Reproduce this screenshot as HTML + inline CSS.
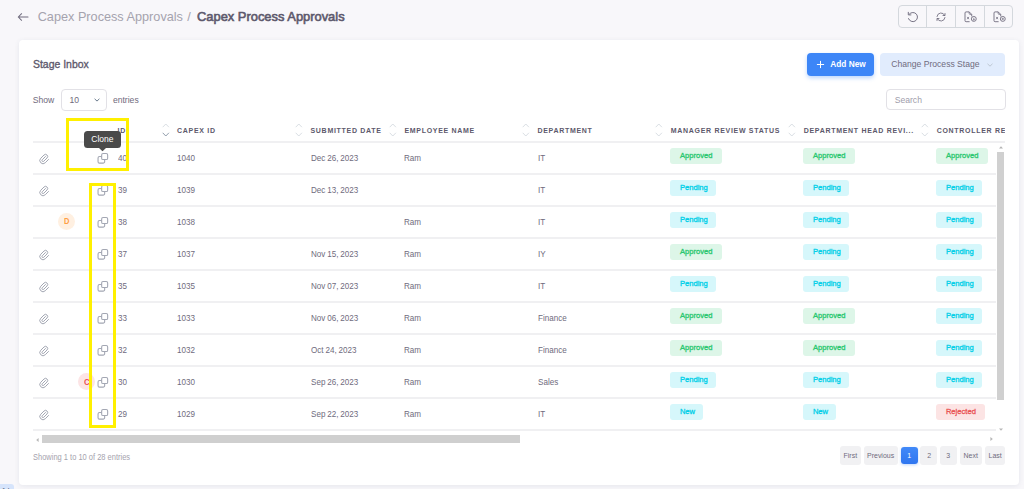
<!DOCTYPE html>
<html><head><meta charset="utf-8"><title>Capex Process Approvals</title>
<style>
html,body{margin:0;padding:0;}
body{width:1024px;height:489px;overflow:hidden;background:#f8f7fa;position:relative;font-family:"Liberation Sans", sans-serif;}
.t{position:absolute;white-space:nowrap;line-height:1;}
.b{position:absolute;}
svg.b{overflow:visible;}
</style></head><body>
<svg class="b" style="left:17px;top:12px" width="12" height="10" viewBox="0 0 12 10"><path d="M1.3 5H11M1.3 5L4.6 1.7M1.3 5L4.6 8.3" fill="none" stroke="#6f6b7d" stroke-width="1.05" stroke-linecap="round" stroke-linejoin="round"/></svg>
<div class="t" style="left:37.70px;top:10.55px;font-size:12.70px;color:#a5a3ae;font-weight:400;letter-spacing:0.000px;">Capex Process Approvals</div>
<div class="t" style="left:187.20px;top:10.55px;font-size:12.70px;color:#a5a3ae;font-weight:400;letter-spacing:0.000px;">/</div>
<div class="t" style="left:197.00px;top:10.68px;font-size:12.90px;color:#5d596c;font-weight:400;letter-spacing:0.000px;-webkit-text-stroke:0.6px #5d596c;">Capex Process Approvals</div>
<div class="b" style="left:897.60px;top:5.30px;width:115.80px;height:22.40px;border:1px solid #d4d8dd;border-radius:4px;box-sizing:border-box;"></div>
<div class="b" style="left:925.90px;top:5.30px;width:1.00px;height:22.40px;background:#d4d8dd;"></div>
<div class="b" style="left:954.90px;top:5.30px;width:1.00px;height:22.40px;background:#d4d8dd;"></div>
<div class="b" style="left:983.80px;top:5.30px;width:1.00px;height:22.40px;background:#d4d8dd;"></div>
<svg class="b" style="left:906.5px;top:11px" width="12" height="12" viewBox="0 0 12 12"><path d="M1.5 7.6A4.6 4.6 0 1 0 2.4 3.0" fill="none" stroke="#6f6b7d" stroke-width="0.95" stroke-linecap="round"/><path d="M1.3 1.3V3.9H3.9" fill="none" stroke="#6f6b7d" stroke-width="0.95" stroke-linecap="round" stroke-linejoin="round"/></svg>
<svg class="b" style="left:935px;top:11px" width="12" height="12" viewBox="0 0 24 24"><path d="M20 11a8.1 8.1 0 0 0 -15.5 -2m-.5 -4v4h4m-4 4a8.1 8.1 0 0 0 15.5 2m.5 4v-4h-4" fill="none" stroke="#6f6b7d" stroke-width="1.7" stroke-linecap="round" stroke-linejoin="round" transform="translate(24 0) scale(-1 1)"/></svg>
<svg class="b" style="left:963.5px;top:10.6px" width="14" height="12" viewBox="0 0 14 12"><path d="M5.6 10.7H2.1A1.1 1.1 0 0 1 1 9.6V2A1.1 1.1 0 0 1 2.1 0.9H5.2L7.7 3.4V5.4" fill="none" stroke="#6f6b7d" stroke-width="0.9" stroke-linejoin="round"/><path d="M5.2 0.9V2.5A0.9 0.9 0 0 0 6.1 3.4H7.7" fill="none" stroke="#6f6b7d" stroke-width="0.8"/><path d="M3.2 5.9L4.9 8.2M4.9 5.9L3.2 8.2" stroke="#6f6b7d" stroke-width="0.75"/><circle cx="9.8" cy="7.9" r="2.45" fill="none" stroke="#6f6b7d" stroke-width="0.9"/><path d="M9.8 6.7V9.1M8.9 8.3L9.8 9.1L10.7 8.3" fill="none" stroke="#6f6b7d" stroke-width="0.7"/></svg>
<svg class="b" style="left:992.5px;top:10.6px" width="14" height="12" viewBox="0 0 14 12"><path d="M5.6 10.7H2.1A1.1 1.1 0 0 1 1 9.6V2A1.1 1.1 0 0 1 2.1 0.9H5.2L7.7 3.4V5.4" fill="none" stroke="#6f6b7d" stroke-width="0.9" stroke-linejoin="round"/><path d="M5.2 0.9V2.5A0.9 0.9 0 0 0 6.1 3.4H7.7" fill="none" stroke="#6f6b7d" stroke-width="0.8"/><path d="M3.2 5.9L4.9 8.2M4.9 5.9L3.2 8.2" stroke="#6f6b7d" stroke-width="0.75"/><circle cx="9.8" cy="7.9" r="2.45" fill="none" stroke="#6f6b7d" stroke-width="0.9"/><path d="M9.8 6.7V9.1M8.6 7.9H11" fill="none" stroke="#6f6b7d" stroke-width="0.7"/></svg>
<div class="b" style="left:18.80px;top:39.80px;width:1000.10px;height:445.20px;background:#fff;border-radius:4px;box-shadow:0 1px 5px rgba(67,89,113,0.10);"></div>
<div class="t" style="left:32.90px;top:59.35px;font-size:11.29px;color:#5d596c;font-weight:400;letter-spacing:0.000px;transform:scaleX(0.9259);transform-origin:0 0;-webkit-text-stroke:0.35px #5d596c;">Stage Inbox</div>
<div class="b" style="left:807.20px;top:53.10px;width:67.20px;height:22.50px;background:#3d86f7;border-radius:4px;box-shadow:0 2px 4px rgba(61,134,247,0.35);"></div>
<svg class="b" style="left:816.5px;top:61px" width="7" height="7" viewBox="0 0 7 7"><path d="M3.5 0.3V6.7M0.3 3.5H6.7" stroke="#fff" stroke-width="1.0" stroke-linecap="round"/></svg>
<div class="t" style="left:830.30px;top:59.97px;font-size:8.30px;color:#fff;font-weight:700;letter-spacing:0.000px;">Add New</div>
<div class="b" style="left:880.30px;top:53.10px;width:124.90px;height:22.50px;background:#e1ecfd;border-radius:4px;"></div>
<div class="t" style="left:891.20px;top:59.72px;font-size:8.60px;color:#6f6b7d;font-weight:400;letter-spacing:0.000px;">Change Process Stage</div>
<svg class="b" style="left:986.5px;top:62.5px" width="6" height="4" viewBox="0 0 6 4"><path d="M0.5 0.8L3 3.2L5.5 0.8" fill="none" stroke="#b4bcc6" stroke-width="0.8"/></svg>
<div class="t" style="left:32.70px;top:96.02px;font-size:8.60px;color:#6f6b7d;font-weight:400;letter-spacing:0.000px;">Show</div>
<div class="b" style="left:61.20px;top:89.00px;width:45.50px;height:21.70px;border:1px solid #e2e1e6;border-radius:4px;box-sizing:border-box;"></div>
<div class="t" style="left:69.50px;top:96.02px;font-size:8.60px;color:#6f6b7d;font-weight:400;letter-spacing:0.000px;">10</div>
<svg class="b" style="left:94px;top:98px" width="6" height="4" viewBox="0 0 6 4"><path d="M0.6 0.8L3 3.1L5.4 0.8" fill="none" stroke="#697a8d" stroke-width="1"/></svg>
<div class="t" style="left:112.90px;top:96.02px;font-size:8.60px;color:#6f6b7d;font-weight:400;letter-spacing:0.000px;">entries</div>
<div class="b" style="left:886.40px;top:89.40px;width:119.20px;height:20.80px;border:1px solid #e2e1e6;border-radius:4px;box-sizing:border-box;"></div>
<div class="t" style="left:894.70px;top:95.92px;font-size:8.60px;color:#a09dab;font-weight:400;letter-spacing:0.000px;">Search</div>
<div class="b" style="left:0;top:0;width:1005px;height:489px;overflow:hidden">
<div class="t" style="left:117.50px;top:127.27px;font-size:7.00px;color:#5d596c;font-weight:700;letter-spacing:0.700px;">ID</div>
<div class="t" style="left:177.10px;top:127.27px;font-size:7.00px;color:#5d596c;font-weight:700;letter-spacing:0.700px;">CAPEX ID</div>
<div class="t" style="left:310.50px;top:127.27px;font-size:7.00px;color:#5d596c;font-weight:700;letter-spacing:0.700px;">SUBMITTED DATE</div>
<div class="t" style="left:404.40px;top:127.27px;font-size:7.00px;color:#5d596c;font-weight:700;letter-spacing:0.700px;">EMPLOYEE NAME</div>
<div class="t" style="left:537.50px;top:127.27px;font-size:7.00px;color:#5d596c;font-weight:700;letter-spacing:0.700px;">DEPARTMENT</div>
<div class="t" style="left:670.70px;top:127.27px;font-size:7.00px;color:#5d596c;font-weight:700;letter-spacing:0.700px;">MANAGER REVIEW STATUS</div>
<div class="t" style="left:803.70px;top:127.27px;font-size:7.00px;color:#5d596c;font-weight:700;letter-spacing:0.700px;">DEPARTMENT HEAD REVI...</div>
<div class="t" style="left:936.70px;top:127.27px;font-size:7.00px;color:#5d596c;font-weight:700;letter-spacing:0.700px;">CONTROLLER RE</div>
<svg class="b" style="left:161.5px;top:123px" width="8" height="14" viewBox="0 0 8 14"><path d="M0.7 4.2L3.8 1L6.9 4.2" fill="none" stroke="#d5dae0" stroke-width="0.9"/><path d="M0.7 9.8L3.8 13L6.9 9.8" fill="none" stroke="#8592a3" stroke-width="0.9"/></svg>
<svg class="b" style="left:294.9px;top:123px" width="8" height="14" viewBox="0 0 8 14"><path d="M0.7 4.2L3.8 1L6.9 4.2" fill="none" stroke="#d5dae0" stroke-width="0.9"/><path d="M0.7 9.8L3.8 13L6.9 9.8" fill="none" stroke="#d5dae0" stroke-width="0.9"/></svg>
<svg class="b" style="left:388.6px;top:123px" width="8" height="14" viewBox="0 0 8 14"><path d="M0.7 4.2L3.8 1L6.9 4.2" fill="none" stroke="#d5dae0" stroke-width="0.9"/><path d="M0.7 9.8L3.8 13L6.9 9.8" fill="none" stroke="#d5dae0" stroke-width="0.9"/></svg>
<svg class="b" style="left:521.9px;top:123px" width="8" height="14" viewBox="0 0 8 14"><path d="M0.7 4.2L3.8 1L6.9 4.2" fill="none" stroke="#d5dae0" stroke-width="0.9"/><path d="M0.7 9.8L3.8 13L6.9 9.8" fill="none" stroke="#d5dae0" stroke-width="0.9"/></svg>
<svg class="b" style="left:654.9px;top:123px" width="8" height="14" viewBox="0 0 8 14"><path d="M0.7 4.2L3.8 1L6.9 4.2" fill="none" stroke="#d5dae0" stroke-width="0.9"/><path d="M0.7 9.8L3.8 13L6.9 9.8" fill="none" stroke="#d5dae0" stroke-width="0.9"/></svg>
<svg class="b" style="left:788.0px;top:123px" width="8" height="14" viewBox="0 0 8 14"><path d="M0.7 4.2L3.8 1L6.9 4.2" fill="none" stroke="#d5dae0" stroke-width="0.9"/><path d="M0.7 9.8L3.8 13L6.9 9.8" fill="none" stroke="#d5dae0" stroke-width="0.9"/></svg>
<svg class="b" style="left:921.4px;top:123px" width="8" height="14" viewBox="0 0 8 14"><path d="M0.7 4.2L3.8 1L6.9 4.2" fill="none" stroke="#d5dae0" stroke-width="0.9"/><path d="M0.7 9.8L3.8 13L6.9 9.8" fill="none" stroke="#d5dae0" stroke-width="0.9"/></svg>
</div>
<div class="b" style="left:33.00px;top:141.00px;width:972.00px;height:2.00px;background:#f0f0f2;"></div>
<div class="b" style="left:0;top:0;width:996px;height:489px;overflow:hidden">
<div class="b" style="left:33.00px;top:173.00px;width:963.00px;height:2.00px;background:#f0f0f2;"></div>
<svg class="b" style="left:37.5px;top:153.30px" width="12" height="12" viewBox="0 0 24 24"><path d="M15 7l-6.5 6.5a1.5 1.5 0 0 0 3 3l6.5 -6.5a3 3 0 0 0 -6 -6l-6.5 6.5a4.5 4.5 0 0 0 9 9l6.5 -6.5" fill="none" stroke="#a3a7b3" stroke-width="2" stroke-linecap="round" stroke-linejoin="round"/></svg>
<svg class="b" style="left:96.7px;top:152.80px" width="12" height="12" viewBox="0 0 12 12"><rect x="4.65" y="0.55" width="6.0" height="6.0" rx="1.4" fill="none" stroke="#a3a7b3" stroke-width="1.1"/><path d="M4.65 3.45H2.55A1.5 1.5 0 0 0 1.05 4.95V8.65A1.5 1.5 0 0 0 2.55 10.15H6.15A1.5 1.5 0 0 0 7.65 8.65V7.05" fill="none" stroke="#a3a7b3" stroke-width="1.1"/></svg>
<div class="t" style="left:117.50px;top:153.05px;font-size:9.40px;color:#6f6b7d;font-weight:400;letter-spacing:0.000px;transform:scaleX(0.8621);transform-origin:0 0;">40</div>
<div class="t" style="left:177.10px;top:153.05px;font-size:9.40px;color:#6f6b7d;font-weight:400;letter-spacing:0.000px;transform:scaleX(0.8621);transform-origin:0 0;">1040</div>
<div class="t" style="left:310.50px;top:153.05px;font-size:9.40px;color:#6f6b7d;font-weight:400;letter-spacing:0.000px;transform:scaleX(0.8621);transform-origin:0 0;word-spacing:-0.5px;">Dec 26, 2023</div>
<div class="t" style="left:404.40px;top:153.05px;font-size:9.40px;color:#6f6b7d;font-weight:400;letter-spacing:0.000px;transform:scaleX(0.8621);transform-origin:0 0;">Ram</div>
<div class="t" style="left:537.50px;top:153.05px;font-size:9.40px;color:#6f6b7d;font-weight:400;letter-spacing:0.000px;transform:scaleX(0.8621);transform-origin:0 0;">IT</div>
<div class="b" style="left:670.20px;top:148.00px;width:51.50px;height:16.00px;background:#ddf6e8;border-radius:3px;"></div>
<div class="t" style="left:679.90px;top:151.67px;font-size:7.60px;color:#28c76f;font-weight:400;letter-spacing:0.000px;-webkit-text-stroke:0.3px #28c76f;">Approved</div>
<div class="b" style="left:803.20px;top:148.00px;width:51.50px;height:16.00px;background:#ddf6e8;border-radius:3px;"></div>
<div class="t" style="left:812.90px;top:151.67px;font-size:7.60px;color:#28c76f;font-weight:400;letter-spacing:0.000px;-webkit-text-stroke:0.3px #28c76f;">Approved</div>
<div class="b" style="left:936.20px;top:148.00px;width:51.50px;height:16.00px;background:#ddf6e8;border-radius:3px;"></div>
<div class="t" style="left:945.90px;top:151.67px;font-size:7.60px;color:#28c76f;font-weight:400;letter-spacing:0.000px;-webkit-text-stroke:0.3px #28c76f;">Approved</div>
<div class="b" style="left:33.00px;top:205.00px;width:963.00px;height:2.00px;background:#f0f0f2;"></div>
<svg class="b" style="left:37.5px;top:185.30px" width="12" height="12" viewBox="0 0 24 24"><path d="M15 7l-6.5 6.5a1.5 1.5 0 0 0 3 3l6.5 -6.5a3 3 0 0 0 -6 -6l-6.5 6.5a4.5 4.5 0 0 0 9 9l6.5 -6.5" fill="none" stroke="#a3a7b3" stroke-width="2" stroke-linecap="round" stroke-linejoin="round"/></svg>
<svg class="b" style="left:96.7px;top:184.80px" width="12" height="12" viewBox="0 0 12 12"><rect x="4.65" y="0.55" width="6.0" height="6.0" rx="1.4" fill="none" stroke="#a3a7b3" stroke-width="1.1"/><path d="M4.65 3.45H2.55A1.5 1.5 0 0 0 1.05 4.95V8.65A1.5 1.5 0 0 0 2.55 10.15H6.15A1.5 1.5 0 0 0 7.65 8.65V7.05" fill="none" stroke="#a3a7b3" stroke-width="1.1"/></svg>
<div class="t" style="left:117.50px;top:185.05px;font-size:9.40px;color:#6f6b7d;font-weight:400;letter-spacing:0.000px;transform:scaleX(0.8621);transform-origin:0 0;">39</div>
<div class="t" style="left:177.10px;top:185.05px;font-size:9.40px;color:#6f6b7d;font-weight:400;letter-spacing:0.000px;transform:scaleX(0.8621);transform-origin:0 0;">1039</div>
<div class="t" style="left:310.50px;top:185.05px;font-size:9.40px;color:#6f6b7d;font-weight:400;letter-spacing:0.000px;transform:scaleX(0.8621);transform-origin:0 0;word-spacing:-0.5px;">Dec 13, 2023</div>
<div class="t" style="left:537.50px;top:185.05px;font-size:9.40px;color:#6f6b7d;font-weight:400;letter-spacing:0.000px;transform:scaleX(0.8621);transform-origin:0 0;">IT</div>
<div class="b" style="left:670.20px;top:180.00px;width:46.10px;height:16.00px;background:#d6f7fb;border-radius:3px;"></div>
<div class="t" style="left:679.90px;top:183.67px;font-size:7.60px;color:#00cfe8;font-weight:400;letter-spacing:0.000px;-webkit-text-stroke:0.3px #00cfe8;">Pending</div>
<div class="b" style="left:803.20px;top:180.00px;width:46.10px;height:16.00px;background:#d6f7fb;border-radius:3px;"></div>
<div class="t" style="left:812.90px;top:183.67px;font-size:7.60px;color:#00cfe8;font-weight:400;letter-spacing:0.000px;-webkit-text-stroke:0.3px #00cfe8;">Pending</div>
<div class="b" style="left:936.20px;top:180.00px;width:46.10px;height:16.00px;background:#d6f7fb;border-radius:3px;"></div>
<div class="t" style="left:945.90px;top:183.67px;font-size:7.60px;color:#00cfe8;font-weight:400;letter-spacing:0.000px;-webkit-text-stroke:0.3px #00cfe8;">Pending</div>
<div class="b" style="left:33.00px;top:237.00px;width:963.00px;height:2.00px;background:#f0f0f2;"></div>
<div class="b" style="left:58px;top:213.00px;width:17.1px;height:17.1px;border-radius:50%;background:#fff0e1;"></div>
<div class="t" style="left:63.80px;top:218.22px;font-size:8.25px;color:#ff9f43;font-weight:700;letter-spacing:0.000px;transform:scaleX(0.9091);transform-origin:0 0;">D</div>
<svg class="b" style="left:96.7px;top:216.80px" width="12" height="12" viewBox="0 0 12 12"><rect x="4.65" y="0.55" width="6.0" height="6.0" rx="1.4" fill="none" stroke="#a3a7b3" stroke-width="1.1"/><path d="M4.65 3.45H2.55A1.5 1.5 0 0 0 1.05 4.95V8.65A1.5 1.5 0 0 0 2.55 10.15H6.15A1.5 1.5 0 0 0 7.65 8.65V7.05" fill="none" stroke="#a3a7b3" stroke-width="1.1"/></svg>
<div class="t" style="left:117.50px;top:217.05px;font-size:9.40px;color:#6f6b7d;font-weight:400;letter-spacing:0.000px;transform:scaleX(0.8621);transform-origin:0 0;">38</div>
<div class="t" style="left:177.10px;top:217.05px;font-size:9.40px;color:#6f6b7d;font-weight:400;letter-spacing:0.000px;transform:scaleX(0.8621);transform-origin:0 0;">1038</div>
<div class="t" style="left:404.40px;top:217.05px;font-size:9.40px;color:#6f6b7d;font-weight:400;letter-spacing:0.000px;transform:scaleX(0.8621);transform-origin:0 0;">Ram</div>
<div class="t" style="left:537.50px;top:217.05px;font-size:9.40px;color:#6f6b7d;font-weight:400;letter-spacing:0.000px;transform:scaleX(0.8621);transform-origin:0 0;">IT</div>
<div class="b" style="left:670.20px;top:212.00px;width:46.10px;height:16.00px;background:#d6f7fb;border-radius:3px;"></div>
<div class="t" style="left:679.90px;top:215.67px;font-size:7.60px;color:#00cfe8;font-weight:400;letter-spacing:0.000px;-webkit-text-stroke:0.3px #00cfe8;">Pending</div>
<div class="b" style="left:803.20px;top:212.00px;width:46.10px;height:16.00px;background:#d6f7fb;border-radius:3px;"></div>
<div class="t" style="left:812.90px;top:215.67px;font-size:7.60px;color:#00cfe8;font-weight:400;letter-spacing:0.000px;-webkit-text-stroke:0.3px #00cfe8;">Pending</div>
<div class="b" style="left:936.20px;top:212.00px;width:46.10px;height:16.00px;background:#d6f7fb;border-radius:3px;"></div>
<div class="t" style="left:945.90px;top:215.67px;font-size:7.60px;color:#00cfe8;font-weight:400;letter-spacing:0.000px;-webkit-text-stroke:0.3px #00cfe8;">Pending</div>
<div class="b" style="left:33.00px;top:269.00px;width:963.00px;height:2.00px;background:#f0f0f2;"></div>
<svg class="b" style="left:37.5px;top:249.30px" width="12" height="12" viewBox="0 0 24 24"><path d="M15 7l-6.5 6.5a1.5 1.5 0 0 0 3 3l6.5 -6.5a3 3 0 0 0 -6 -6l-6.5 6.5a4.5 4.5 0 0 0 9 9l6.5 -6.5" fill="none" stroke="#a3a7b3" stroke-width="2" stroke-linecap="round" stroke-linejoin="round"/></svg>
<svg class="b" style="left:96.7px;top:248.80px" width="12" height="12" viewBox="0 0 12 12"><rect x="4.65" y="0.55" width="6.0" height="6.0" rx="1.4" fill="none" stroke="#a3a7b3" stroke-width="1.1"/><path d="M4.65 3.45H2.55A1.5 1.5 0 0 0 1.05 4.95V8.65A1.5 1.5 0 0 0 2.55 10.15H6.15A1.5 1.5 0 0 0 7.65 8.65V7.05" fill="none" stroke="#a3a7b3" stroke-width="1.1"/></svg>
<div class="t" style="left:117.50px;top:249.05px;font-size:9.40px;color:#6f6b7d;font-weight:400;letter-spacing:0.000px;transform:scaleX(0.8621);transform-origin:0 0;">37</div>
<div class="t" style="left:177.10px;top:249.05px;font-size:9.40px;color:#6f6b7d;font-weight:400;letter-spacing:0.000px;transform:scaleX(0.8621);transform-origin:0 0;">1037</div>
<div class="t" style="left:310.50px;top:249.05px;font-size:9.40px;color:#6f6b7d;font-weight:400;letter-spacing:0.000px;transform:scaleX(0.8621);transform-origin:0 0;word-spacing:-0.5px;">Nov 15, 2023</div>
<div class="t" style="left:404.40px;top:249.05px;font-size:9.40px;color:#6f6b7d;font-weight:400;letter-spacing:0.000px;transform:scaleX(0.8621);transform-origin:0 0;">Ram</div>
<div class="t" style="left:537.50px;top:249.05px;font-size:9.40px;color:#6f6b7d;font-weight:400;letter-spacing:0.000px;transform:scaleX(0.8621);transform-origin:0 0;">IY</div>
<div class="b" style="left:670.20px;top:244.00px;width:51.50px;height:16.00px;background:#ddf6e8;border-radius:3px;"></div>
<div class="t" style="left:679.90px;top:247.67px;font-size:7.60px;color:#28c76f;font-weight:400;letter-spacing:0.000px;-webkit-text-stroke:0.3px #28c76f;">Approved</div>
<div class="b" style="left:803.20px;top:244.00px;width:46.10px;height:16.00px;background:#d6f7fb;border-radius:3px;"></div>
<div class="t" style="left:812.90px;top:247.67px;font-size:7.60px;color:#00cfe8;font-weight:400;letter-spacing:0.000px;-webkit-text-stroke:0.3px #00cfe8;">Pending</div>
<div class="b" style="left:936.20px;top:244.00px;width:46.10px;height:16.00px;background:#d6f7fb;border-radius:3px;"></div>
<div class="t" style="left:945.90px;top:247.67px;font-size:7.60px;color:#00cfe8;font-weight:400;letter-spacing:0.000px;-webkit-text-stroke:0.3px #00cfe8;">Pending</div>
<div class="b" style="left:33.00px;top:301.00px;width:963.00px;height:2.00px;background:#f0f0f2;"></div>
<svg class="b" style="left:37.5px;top:281.30px" width="12" height="12" viewBox="0 0 24 24"><path d="M15 7l-6.5 6.5a1.5 1.5 0 0 0 3 3l6.5 -6.5a3 3 0 0 0 -6 -6l-6.5 6.5a4.5 4.5 0 0 0 9 9l6.5 -6.5" fill="none" stroke="#a3a7b3" stroke-width="2" stroke-linecap="round" stroke-linejoin="round"/></svg>
<svg class="b" style="left:96.7px;top:280.80px" width="12" height="12" viewBox="0 0 12 12"><rect x="4.65" y="0.55" width="6.0" height="6.0" rx="1.4" fill="none" stroke="#a3a7b3" stroke-width="1.1"/><path d="M4.65 3.45H2.55A1.5 1.5 0 0 0 1.05 4.95V8.65A1.5 1.5 0 0 0 2.55 10.15H6.15A1.5 1.5 0 0 0 7.65 8.65V7.05" fill="none" stroke="#a3a7b3" stroke-width="1.1"/></svg>
<div class="t" style="left:117.50px;top:281.05px;font-size:9.40px;color:#6f6b7d;font-weight:400;letter-spacing:0.000px;transform:scaleX(0.8621);transform-origin:0 0;">35</div>
<div class="t" style="left:177.10px;top:281.05px;font-size:9.40px;color:#6f6b7d;font-weight:400;letter-spacing:0.000px;transform:scaleX(0.8621);transform-origin:0 0;">1035</div>
<div class="t" style="left:310.50px;top:281.05px;font-size:9.40px;color:#6f6b7d;font-weight:400;letter-spacing:0.000px;transform:scaleX(0.8621);transform-origin:0 0;word-spacing:-0.5px;">Nov 07, 2023</div>
<div class="t" style="left:404.40px;top:281.05px;font-size:9.40px;color:#6f6b7d;font-weight:400;letter-spacing:0.000px;transform:scaleX(0.8621);transform-origin:0 0;">Ram</div>
<div class="t" style="left:537.50px;top:281.05px;font-size:9.40px;color:#6f6b7d;font-weight:400;letter-spacing:0.000px;transform:scaleX(0.8621);transform-origin:0 0;">IT</div>
<div class="b" style="left:670.20px;top:276.00px;width:46.10px;height:16.00px;background:#d6f7fb;border-radius:3px;"></div>
<div class="t" style="left:679.90px;top:279.67px;font-size:7.60px;color:#00cfe8;font-weight:400;letter-spacing:0.000px;-webkit-text-stroke:0.3px #00cfe8;">Pending</div>
<div class="b" style="left:803.20px;top:276.00px;width:46.10px;height:16.00px;background:#d6f7fb;border-radius:3px;"></div>
<div class="t" style="left:812.90px;top:279.67px;font-size:7.60px;color:#00cfe8;font-weight:400;letter-spacing:0.000px;-webkit-text-stroke:0.3px #00cfe8;">Pending</div>
<div class="b" style="left:936.20px;top:276.00px;width:46.10px;height:16.00px;background:#d6f7fb;border-radius:3px;"></div>
<div class="t" style="left:945.90px;top:279.67px;font-size:7.60px;color:#00cfe8;font-weight:400;letter-spacing:0.000px;-webkit-text-stroke:0.3px #00cfe8;">Pending</div>
<div class="b" style="left:33.00px;top:333.00px;width:963.00px;height:2.00px;background:#f0f0f2;"></div>
<svg class="b" style="left:37.5px;top:313.30px" width="12" height="12" viewBox="0 0 24 24"><path d="M15 7l-6.5 6.5a1.5 1.5 0 0 0 3 3l6.5 -6.5a3 3 0 0 0 -6 -6l-6.5 6.5a4.5 4.5 0 0 0 9 9l6.5 -6.5" fill="none" stroke="#a3a7b3" stroke-width="2" stroke-linecap="round" stroke-linejoin="round"/></svg>
<svg class="b" style="left:96.7px;top:312.80px" width="12" height="12" viewBox="0 0 12 12"><rect x="4.65" y="0.55" width="6.0" height="6.0" rx="1.4" fill="none" stroke="#a3a7b3" stroke-width="1.1"/><path d="M4.65 3.45H2.55A1.5 1.5 0 0 0 1.05 4.95V8.65A1.5 1.5 0 0 0 2.55 10.15H6.15A1.5 1.5 0 0 0 7.65 8.65V7.05" fill="none" stroke="#a3a7b3" stroke-width="1.1"/></svg>
<div class="t" style="left:117.50px;top:313.05px;font-size:9.40px;color:#6f6b7d;font-weight:400;letter-spacing:0.000px;transform:scaleX(0.8621);transform-origin:0 0;">33</div>
<div class="t" style="left:177.10px;top:313.05px;font-size:9.40px;color:#6f6b7d;font-weight:400;letter-spacing:0.000px;transform:scaleX(0.8621);transform-origin:0 0;">1033</div>
<div class="t" style="left:310.50px;top:313.05px;font-size:9.40px;color:#6f6b7d;font-weight:400;letter-spacing:0.000px;transform:scaleX(0.8621);transform-origin:0 0;word-spacing:-0.5px;">Nov 06, 2023</div>
<div class="t" style="left:404.40px;top:313.05px;font-size:9.40px;color:#6f6b7d;font-weight:400;letter-spacing:0.000px;transform:scaleX(0.8621);transform-origin:0 0;">Ram</div>
<div class="t" style="left:537.50px;top:313.05px;font-size:9.40px;color:#6f6b7d;font-weight:400;letter-spacing:0.000px;transform:scaleX(0.8621);transform-origin:0 0;">Finance</div>
<div class="b" style="left:670.20px;top:308.00px;width:51.50px;height:16.00px;background:#ddf6e8;border-radius:3px;"></div>
<div class="t" style="left:679.90px;top:311.67px;font-size:7.60px;color:#28c76f;font-weight:400;letter-spacing:0.000px;-webkit-text-stroke:0.3px #28c76f;">Approved</div>
<div class="b" style="left:803.20px;top:308.00px;width:51.50px;height:16.00px;background:#ddf6e8;border-radius:3px;"></div>
<div class="t" style="left:812.90px;top:311.67px;font-size:7.60px;color:#28c76f;font-weight:400;letter-spacing:0.000px;-webkit-text-stroke:0.3px #28c76f;">Approved</div>
<div class="b" style="left:936.20px;top:308.00px;width:46.10px;height:16.00px;background:#d6f7fb;border-radius:3px;"></div>
<div class="t" style="left:945.90px;top:311.67px;font-size:7.60px;color:#00cfe8;font-weight:400;letter-spacing:0.000px;-webkit-text-stroke:0.3px #00cfe8;">Pending</div>
<div class="b" style="left:33.00px;top:365.00px;width:963.00px;height:2.00px;background:#f0f0f2;"></div>
<svg class="b" style="left:37.5px;top:345.30px" width="12" height="12" viewBox="0 0 24 24"><path d="M15 7l-6.5 6.5a1.5 1.5 0 0 0 3 3l6.5 -6.5a3 3 0 0 0 -6 -6l-6.5 6.5a4.5 4.5 0 0 0 9 9l6.5 -6.5" fill="none" stroke="#a3a7b3" stroke-width="2" stroke-linecap="round" stroke-linejoin="round"/></svg>
<svg class="b" style="left:96.7px;top:344.80px" width="12" height="12" viewBox="0 0 12 12"><rect x="4.65" y="0.55" width="6.0" height="6.0" rx="1.4" fill="none" stroke="#a3a7b3" stroke-width="1.1"/><path d="M4.65 3.45H2.55A1.5 1.5 0 0 0 1.05 4.95V8.65A1.5 1.5 0 0 0 2.55 10.15H6.15A1.5 1.5 0 0 0 7.65 8.65V7.05" fill="none" stroke="#a3a7b3" stroke-width="1.1"/></svg>
<div class="t" style="left:117.50px;top:345.05px;font-size:9.40px;color:#6f6b7d;font-weight:400;letter-spacing:0.000px;transform:scaleX(0.8621);transform-origin:0 0;">32</div>
<div class="t" style="left:177.10px;top:345.05px;font-size:9.40px;color:#6f6b7d;font-weight:400;letter-spacing:0.000px;transform:scaleX(0.8621);transform-origin:0 0;">1032</div>
<div class="t" style="left:310.50px;top:345.05px;font-size:9.40px;color:#6f6b7d;font-weight:400;letter-spacing:0.000px;transform:scaleX(0.8621);transform-origin:0 0;word-spacing:-0.5px;">Oct 24, 2023</div>
<div class="t" style="left:404.40px;top:345.05px;font-size:9.40px;color:#6f6b7d;font-weight:400;letter-spacing:0.000px;transform:scaleX(0.8621);transform-origin:0 0;">Ram</div>
<div class="t" style="left:537.50px;top:345.05px;font-size:9.40px;color:#6f6b7d;font-weight:400;letter-spacing:0.000px;transform:scaleX(0.8621);transform-origin:0 0;">Finance</div>
<div class="b" style="left:670.20px;top:340.00px;width:51.50px;height:16.00px;background:#ddf6e8;border-radius:3px;"></div>
<div class="t" style="left:679.90px;top:343.67px;font-size:7.60px;color:#28c76f;font-weight:400;letter-spacing:0.000px;-webkit-text-stroke:0.3px #28c76f;">Approved</div>
<div class="b" style="left:803.20px;top:340.00px;width:51.50px;height:16.00px;background:#ddf6e8;border-radius:3px;"></div>
<div class="t" style="left:812.90px;top:343.67px;font-size:7.60px;color:#28c76f;font-weight:400;letter-spacing:0.000px;-webkit-text-stroke:0.3px #28c76f;">Approved</div>
<div class="b" style="left:936.20px;top:340.00px;width:46.10px;height:16.00px;background:#d6f7fb;border-radius:3px;"></div>
<div class="t" style="left:945.90px;top:343.67px;font-size:7.60px;color:#00cfe8;font-weight:400;letter-spacing:0.000px;-webkit-text-stroke:0.3px #00cfe8;">Pending</div>
<div class="b" style="left:33.00px;top:397.00px;width:963.00px;height:2.00px;background:#f0f0f2;"></div>
<svg class="b" style="left:37.5px;top:377.30px" width="12" height="12" viewBox="0 0 24 24"><path d="M15 7l-6.5 6.5a1.5 1.5 0 0 0 3 3l6.5 -6.5a3 3 0 0 0 -6 -6l-6.5 6.5a4.5 4.5 0 0 0 9 9l6.5 -6.5" fill="none" stroke="#a3a7b3" stroke-width="2" stroke-linecap="round" stroke-linejoin="round"/></svg>
<div class="b" style="left:77.7px;top:372.90px;width:17.2px;height:17.2px;border-radius:50%;background:#fce4e5;"></div>
<div class="t" style="left:84.00px;top:377.89px;font-size:8.64px;color:#ea5455;font-weight:700;letter-spacing:0.000px;transform:scaleX(0.9259);transform-origin:0 0;">C</div>
<svg class="b" style="left:96.7px;top:376.80px" width="12" height="12" viewBox="0 0 12 12"><rect x="4.65" y="0.55" width="6.0" height="6.0" rx="1.4" fill="none" stroke="#a3a7b3" stroke-width="1.1"/><path d="M4.65 3.45H2.55A1.5 1.5 0 0 0 1.05 4.95V8.65A1.5 1.5 0 0 0 2.55 10.15H6.15A1.5 1.5 0 0 0 7.65 8.65V7.05" fill="none" stroke="#a3a7b3" stroke-width="1.1"/></svg>
<div class="t" style="left:117.50px;top:377.05px;font-size:9.40px;color:#6f6b7d;font-weight:400;letter-spacing:0.000px;transform:scaleX(0.8621);transform-origin:0 0;">30</div>
<div class="t" style="left:177.10px;top:377.05px;font-size:9.40px;color:#6f6b7d;font-weight:400;letter-spacing:0.000px;transform:scaleX(0.8621);transform-origin:0 0;">1030</div>
<div class="t" style="left:310.50px;top:377.05px;font-size:9.40px;color:#6f6b7d;font-weight:400;letter-spacing:0.000px;transform:scaleX(0.8621);transform-origin:0 0;word-spacing:-0.5px;">Sep 26, 2023</div>
<div class="t" style="left:404.40px;top:377.05px;font-size:9.40px;color:#6f6b7d;font-weight:400;letter-spacing:0.000px;transform:scaleX(0.8621);transform-origin:0 0;">Ram</div>
<div class="t" style="left:537.50px;top:377.05px;font-size:9.40px;color:#6f6b7d;font-weight:400;letter-spacing:0.000px;transform:scaleX(0.8621);transform-origin:0 0;">Sales</div>
<div class="b" style="left:670.20px;top:372.00px;width:46.10px;height:16.00px;background:#d6f7fb;border-radius:3px;"></div>
<div class="t" style="left:679.90px;top:375.67px;font-size:7.60px;color:#00cfe8;font-weight:400;letter-spacing:0.000px;-webkit-text-stroke:0.3px #00cfe8;">Pending</div>
<div class="b" style="left:803.20px;top:372.00px;width:46.10px;height:16.00px;background:#d6f7fb;border-radius:3px;"></div>
<div class="t" style="left:812.90px;top:375.67px;font-size:7.60px;color:#00cfe8;font-weight:400;letter-spacing:0.000px;-webkit-text-stroke:0.3px #00cfe8;">Pending</div>
<div class="b" style="left:936.20px;top:372.00px;width:46.10px;height:16.00px;background:#d6f7fb;border-radius:3px;"></div>
<div class="t" style="left:945.90px;top:375.67px;font-size:7.60px;color:#00cfe8;font-weight:400;letter-spacing:0.000px;-webkit-text-stroke:0.3px #00cfe8;">Pending</div>
<div class="b" style="left:33.00px;top:429.00px;width:963.00px;height:2.00px;background:#f0f0f2;"></div>
<svg class="b" style="left:37.5px;top:409.30px" width="12" height="12" viewBox="0 0 24 24"><path d="M15 7l-6.5 6.5a1.5 1.5 0 0 0 3 3l6.5 -6.5a3 3 0 0 0 -6 -6l-6.5 6.5a4.5 4.5 0 0 0 9 9l6.5 -6.5" fill="none" stroke="#a3a7b3" stroke-width="2" stroke-linecap="round" stroke-linejoin="round"/></svg>
<svg class="b" style="left:96.7px;top:408.80px" width="12" height="12" viewBox="0 0 12 12"><rect x="4.65" y="0.55" width="6.0" height="6.0" rx="1.4" fill="none" stroke="#a3a7b3" stroke-width="1.1"/><path d="M4.65 3.45H2.55A1.5 1.5 0 0 0 1.05 4.95V8.65A1.5 1.5 0 0 0 2.55 10.15H6.15A1.5 1.5 0 0 0 7.65 8.65V7.05" fill="none" stroke="#a3a7b3" stroke-width="1.1"/></svg>
<div class="t" style="left:117.50px;top:409.05px;font-size:9.40px;color:#6f6b7d;font-weight:400;letter-spacing:0.000px;transform:scaleX(0.8621);transform-origin:0 0;">29</div>
<div class="t" style="left:177.10px;top:409.05px;font-size:9.40px;color:#6f6b7d;font-weight:400;letter-spacing:0.000px;transform:scaleX(0.8621);transform-origin:0 0;">1029</div>
<div class="t" style="left:310.50px;top:409.05px;font-size:9.40px;color:#6f6b7d;font-weight:400;letter-spacing:0.000px;transform:scaleX(0.8621);transform-origin:0 0;word-spacing:-0.5px;">Sep 22, 2023</div>
<div class="t" style="left:404.40px;top:409.05px;font-size:9.40px;color:#6f6b7d;font-weight:400;letter-spacing:0.000px;transform:scaleX(0.8621);transform-origin:0 0;">Ram</div>
<div class="t" style="left:537.50px;top:409.05px;font-size:9.40px;color:#6f6b7d;font-weight:400;letter-spacing:0.000px;transform:scaleX(0.8621);transform-origin:0 0;">IT</div>
<div class="b" style="left:670.20px;top:404.00px;width:33.20px;height:16.00px;background:#d6f7fb;border-radius:3px;"></div>
<div class="t" style="left:679.90px;top:407.67px;font-size:7.60px;color:#00cfe8;font-weight:400;letter-spacing:0.000px;-webkit-text-stroke:0.3px #00cfe8;">New</div>
<div class="b" style="left:803.20px;top:404.00px;width:33.20px;height:16.00px;background:#d6f7fb;border-radius:3px;"></div>
<div class="t" style="left:812.90px;top:407.67px;font-size:7.60px;color:#00cfe8;font-weight:400;letter-spacing:0.000px;-webkit-text-stroke:0.3px #00cfe8;">New</div>
<div class="b" style="left:936.20px;top:404.00px;width:48.80px;height:16.00px;background:#fce4e4;border-radius:3px;"></div>
<div class="t" style="left:945.90px;top:407.67px;font-size:7.60px;color:#ea5455;font-weight:400;letter-spacing:0.000px;-webkit-text-stroke:0.3px #ea5455;">Rejected</div>
</div>
<div class="b" style="left:997.00px;top:151.60px;width:6.80px;height:248.90px;background:#d0d0d0;"></div>
<svg class="b" style="left:998.6px;top:145.6px" width="4" height="3" viewBox="0 0 4 3"><path d="M0 2.6L2 0.2L4 2.6Z" fill="#b4b4b4"/></svg>
<svg class="b" style="left:998.5px;top:427.5px" width="4" height="3" viewBox="0 0 4 3"><path d="M0 0.4L2 2.8L4 0.4Z" fill="#b8b8b8"/></svg>
<div class="b" style="left:42.30px;top:435.20px;width:477.70px;height:7.50px;background:#cfcfcf;"></div>
<svg class="b" style="left:36px;top:437.5px" width="3" height="4" viewBox="0 0 3 4"><path d="M2.6 0L0.2 2L2.6 4Z" fill="#b8b8b8"/></svg>
<svg class="b" style="left:990px;top:437px" width="3" height="4" viewBox="0 0 3 4"><path d="M0.4 0L2.8 2L0.4 4Z" fill="#b8b8b8"/></svg>
<div class="t" style="left:32.80px;top:452.96px;font-size:8.55px;color:#a5a3ae;font-weight:400;letter-spacing:0.000px;transform:scaleX(0.8772);transform-origin:0 0;">Showing 1 to 10 of 28 entries</div>
<div class="b" style="left:840.30px;top:446.10px;width:20.70px;height:18.70px;background:#f1f1f3;border-radius:3px;"></div>
<div class="t" style="left:840.30px;width:20.70px;text-align:center;top:451.55px;font-size:7.5px;color:#6f6b7d"><span style="display:inline-block;transform:scaleX(0.93)">First</span></div>
<div class="b" style="left:864.10px;top:446.10px;width:33.60px;height:18.70px;background:#f1f1f3;border-radius:3px;"></div>
<div class="t" style="left:864.10px;width:33.60px;text-align:center;top:451.55px;font-size:7.5px;color:#6f6b7d"><span style="display:inline-block;transform:scaleX(0.93)">Previous</span></div>
<div class="b" style="left:900.50px;top:446.70px;width:17.50px;height:17.50px;background:linear-gradient(#4189f8,#2f76f0);border-radius:3px;box-shadow:0 1px 3px rgba(47,118,240,0.3);"></div>
<div class="t" style="left:900.50px;width:17.50px;text-align:center;top:451.55px;font-size:7.5px;color:#fff"><span style="display:inline-block;transform:scaleX(0.93)">1</span></div>
<div class="b" style="left:920.20px;top:446.10px;width:17.10px;height:18.70px;background:#f1f1f3;border-radius:3px;"></div>
<div class="t" style="left:920.20px;width:17.10px;text-align:center;top:451.55px;font-size:7.5px;color:#6f6b7d"><span style="display:inline-block;transform:scaleX(0.93)">2</span></div>
<div class="b" style="left:940.00px;top:446.10px;width:16.80px;height:18.70px;background:#f1f1f3;border-radius:3px;"></div>
<div class="t" style="left:940.00px;width:16.80px;text-align:center;top:451.55px;font-size:7.5px;color:#6f6b7d"><span style="display:inline-block;transform:scaleX(0.93)">3</span></div>
<div class="b" style="left:960.00px;top:446.10px;width:22.00px;height:18.70px;background:#f1f1f3;border-radius:3px;"></div>
<div class="t" style="left:960.00px;width:22.00px;text-align:center;top:451.55px;font-size:7.5px;color:#6f6b7d"><span style="display:inline-block;transform:scaleX(0.93)">Next</span></div>
<div class="b" style="left:984.50px;top:446.10px;width:20.70px;height:18.70px;background:#f1f1f3;border-radius:3px;"></div>
<div class="t" style="left:984.50px;width:20.70px;text-align:center;top:451.55px;font-size:7.5px;color:#6f6b7d"><span style="display:inline-block;transform:scaleX(0.93)">Last</span></div>
<div class="b" style="left:66.30px;top:118.30px;width:62.80px;height:52.60px;border:3px solid #fff000;box-sizing:border-box;"></div>
<div class="b" style="left:89.10px;top:182.50px;width:26.90px;height:245.20px;border:3px solid #fff000;box-sizing:border-box;"></div>
<div class="b" style="left:84.20px;top:131.00px;width:36.60px;height:17.00px;background:#4a4a4a;border-radius:3.5px;"></div>
<svg class="b" style="left:99px;top:147.5px" width="7" height="4" viewBox="0 0 7 4"><path d="M0 0H7L3.5 3.2Z" fill="#4a4a4a"/></svg>
<div class="t" style="left:91.30px;top:134.70px;font-size:8.50px;color:#fff;font-weight:400;letter-spacing:0.000px;">Clone</div>
<div class="b" style="left:0.00px;top:484.20px;width:14.00px;height:10.80px;background:#d6e4fb;border-radius:0 3px 0 0;"></div>
<div class="t" style="left:1.5px;top:486.5px;font-size:6px;color:#6b7690;font-weight:700">Adm</div>
</body></html>
